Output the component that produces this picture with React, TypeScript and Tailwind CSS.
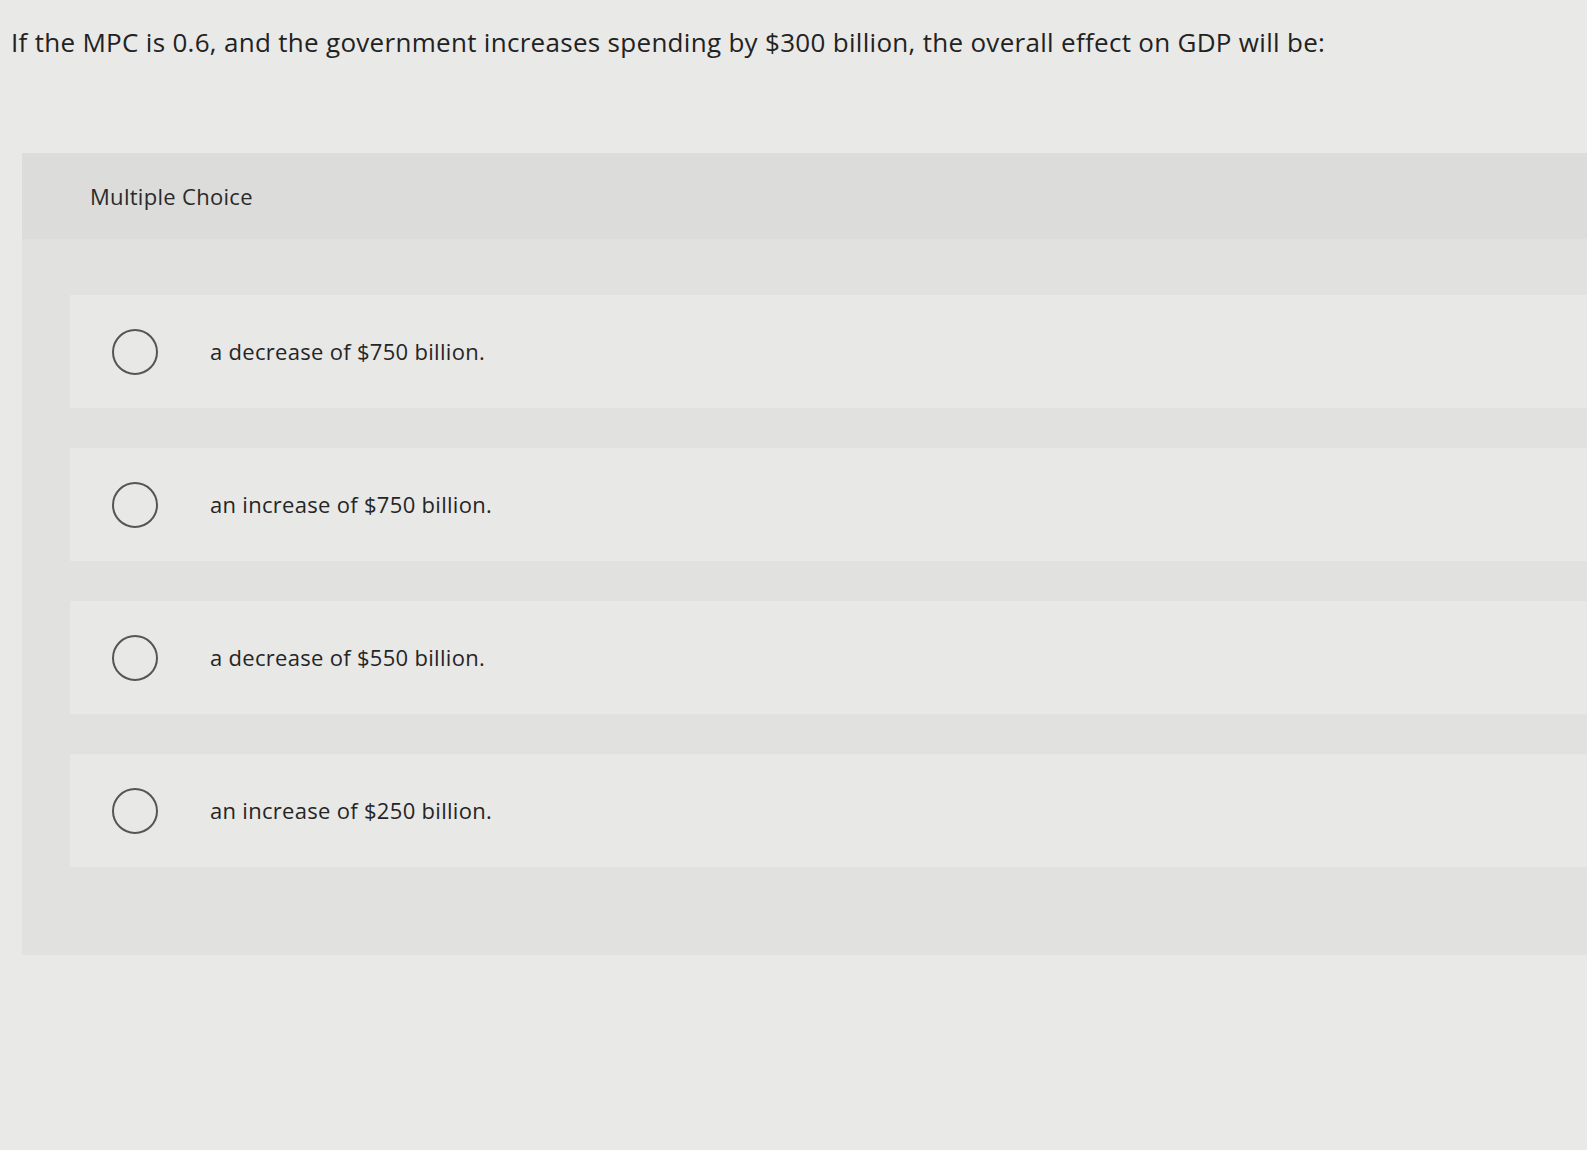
const choices = [
    'a decrease of $750 billion.',
    'an increase of $750 billion.',
    'a decrease of $550 billion.',
    'an increase of $250 billion.',
];

const App = () => {
    return (
        <div
            className="min-h-[1150px] w-full overflow-hidden bg-[#e9e9e8] text-[#2f2f2f]"
            style={{ fontFamily: '"Open Sans", "Noto Sans", sans-serif' }}
        >
            <p className="pl-[11px] pt-[26px] text-[26px] leading-[32px] tracking-[0.3px] text-[#222]">
                If the MPC is 0.6, and the government increases spending by $300 billion, the overall effect on GDP will be:
            </p>

            <div className="ml-[22px] mt-[95px] bg-[#dcdcdb]">
                {/* header */}
                <div className="flex h-[86px] items-center pl-[68px]">
                    <span className="text-[22px] tracking-[0.3px] text-[#2a2a2a]">Multiple Choice</span>
                </div>

                <div className="flex flex-col gap-[40px] bg-[#e1e1e0] pt-[56px] pb-[88px] pl-[48px]">
                    {choices.map((c) => (
                        <div key={c} className="flex h-[113px] items-center bg-[#e8e8e7] pl-[42px]">
                            <span className="h-[46px] w-[46px] shrink-0 rounded-full border-2 border-[#555]" />
                            <span className="ml-[52px] text-[22px] tracking-[0.3px] text-[#252525]">{c}</span>
                        </div>
                    ))}
                </div>
            </div>
        </div>
    );
};

export default App;
